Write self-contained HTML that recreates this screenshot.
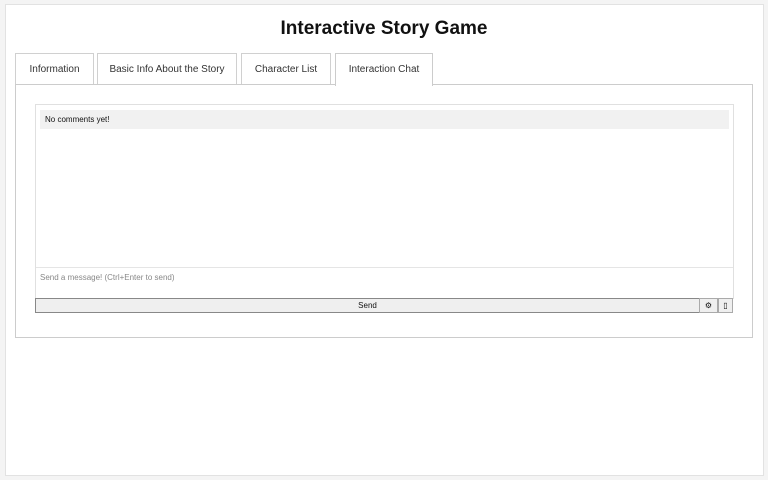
<!DOCTYPE html>
<html><head><style>
body{margin:0;width:768px;height:480px;background:#f4f4f4;font-family:"Liberation Sans",sans-serif;position:relative;overflow:hidden}
.card{position:absolute;left:5px;top:4px;width:757px;height:470px;background:#fff;border:1px solid #e2e2e2}
h1{position:absolute;left:0;right:0;top:18px;margin:0;text-align:center;font-size:19px;font-weight:bold;color:#111}
.tab{position:absolute;top:53px;height:31px;border:1px solid #d0d0d0;border-bottom:none;background:#fff;font-size:10px;color:#333;line-height:31px;text-align:center;box-sizing:border-box}
.panel{position:absolute;left:15px;top:84px;width:738px;height:254px;border:1px solid #ccc;box-sizing:border-box}
.box{position:absolute;left:35px;top:104px;width:699px;height:195px;border:1px solid #e0e0e0;box-sizing:border-box}
.msg{position:absolute;left:4px;top:5px;right:4px;height:19px;background:#f1f1f1;font-size:8px;line-height:19px;padding-left:5px;color:#111}
.div{position:absolute;left:0;right:0;top:162px;border-top:1px solid #e5e5e5}
.ph{position:absolute;left:4px;top:168px;font-size:8px;color:#888}
.btn{position:absolute;top:298px;height:15px;border:1px solid #888;background:#efefef;box-sizing:border-box;font-size:8px;line-height:13px;text-align:center;color:#111}
</style></head><body>
<div class="card"></div>
<h1>Interactive Story Game</h1>
<div class="tab" style="left:15px;width:79px">Information</div>
<div class="tab" style="left:97px;width:140px">Basic Info About the Story</div>
<div class="tab" style="left:241px;width:90px">Character List</div>
<div class="panel"></div>
<div class="tab" style="left:335px;width:98px;height:33px;z-index:2;border-color:#ccc">Interaction Chat</div>
<div class="box"><div class="msg">No comments yet!</div><div class="div"></div><div class="ph">Send a message! (Ctrl+Enter to send)</div></div>
<div class="btn" style="left:35px;width:665px">Send</div>
<div class="btn" style="left:699px;width:19px;border-color:#aaa">⚙</div>
<div class="btn" style="left:718px;width:15px;border-color:#aaa">▯</div>
</body></html>
